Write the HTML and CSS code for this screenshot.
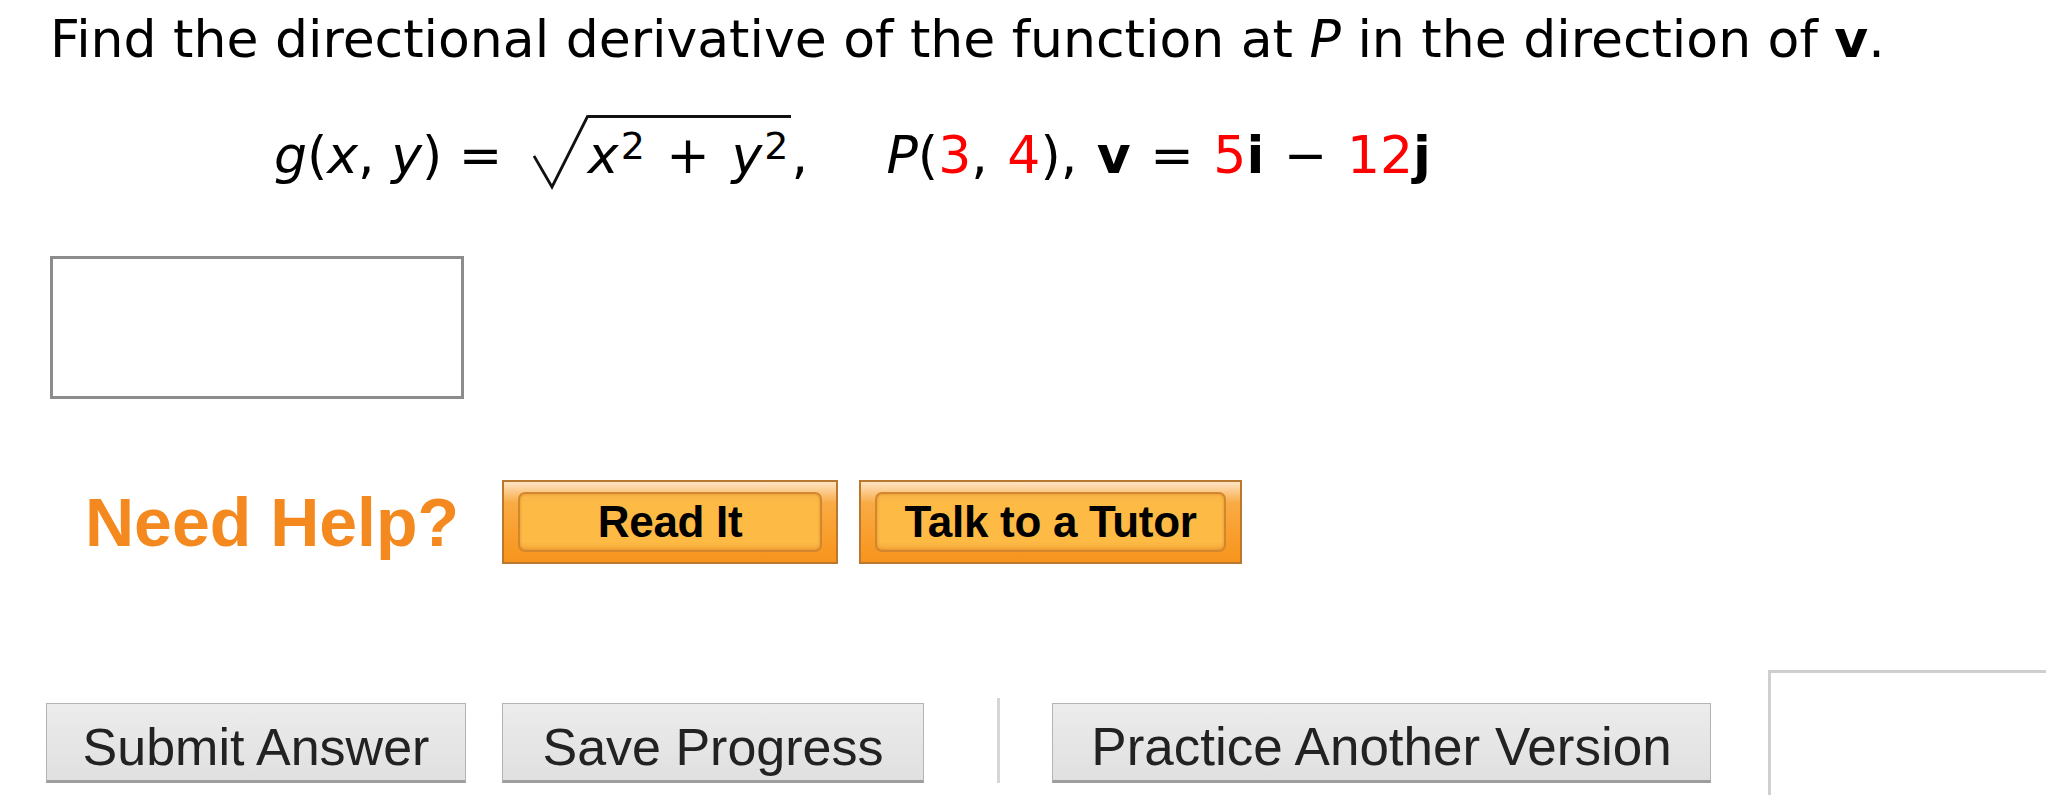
FILE: index.html
```html
<!DOCTYPE html>
<html>
<head>
<meta charset="utf-8">
<title>Directional derivative</title>
<link rel="stylesheet" href="styles.css">
</head>
<body>

<div class="question">
    <p class="qtext">Find the directional derivative of the function at <i>P</i> in the direction of <b>v</b>.</p>
    <p class="formula">
        <i>g</i>(<i>x</i>, <i>y</i>) = <span class="root"><svg class="rad" width="56" height="76" viewBox="0 0 56 76"><path d="M1 42 L19 73 L55 1.5" fill="none" stroke="#111" stroke-width="2.8"/></svg><span class="under"><i>x</i><sup>2</sup> + <i>y</i><sup>2</sup></span></span>,
        <span class="pt"><i>P</i>(<em class="r">3</em>, <em class="r">4</em>), <b>v</b> = <em class="r">5</em><b>i</b> &minus; <em class="r">12</em><b>j</b></span>
    </p>
    <div class="ans"></div>

    <div class="help">
        <span class="needhelp">Need Help?</span>
        <a class="obtn btn-read"><span>Read It</span></a>
        <a class="obtn btn-tutor"><span>Talk to a Tutor</span></a>
    </div>

    <div class="actions">
        <a class="gbtn btn-submit">Submit Answer</a>
        <a class="gbtn btn-save">Save Progress</a>
        <i class="sep"></i>
        <a class="gbtn btn-practice">Practice Another Version</a>
        <div class="side"></div>
    </div>
</div>

</body>
</html>
```

FILE: styles.css
```css
body,p{margin:0;padding:0;}
body{background:#fff;color:#000;overflow:hidden;}
a{text-decoration:none;color:#000;}

.question{padding:0 0 0 50px;font-family:'DejaVu Sans',Verdana,sans-serif;}
.qtext{font-size:52px;line-height:70px;padding-top:4px;white-space:nowrap;}
.qtext b{font-weight:bold;}

.formula{font-size:52px;line-height:90px;padding:36px 0 0 224px;white-space:nowrap;}
.formula i{font-style:italic;}
.formula em.r{font-style:normal;color:#f00;}
.formula sup{font-size:38px;line-height:0;vertical-align:14px;padding-left:2px;}
.root{display:inline-block;margin-left:14px;}
.rad{vertical-align:-17px;margin-right:-1px;}
.under{display:inline-block;border-top:3px solid #111;line-height:74px;padding:0 3px 0 0;word-spacing:5px;}
.pt{margin-left:62px;word-spacing:3px;}

.ans{width:408px;height:137px;border:3px solid #8c8c8c;margin-top:56px;}

.help{display:flex;align-items:center;margin-top:81px;}
.needhelp{font:bold 68px/84px 'Liberation Sans',Arial,sans-serif;color:#f4891f;padding:0 43px 0 35px;}
.obtn{display:block;flex-shrink:0;height:84px;padding:10px 14px;box-sizing:border-box;border:2px solid #b9772f;background:linear-gradient(#fee3c4 0%,#f9ab45 26%,#f9a030 60%,#f7941d 100%);margin-right:21px;}
.obtn span{display:block;height:100%;box-sizing:border-box;border:2px solid #d4862e;border-radius:7px;background:linear-gradient(#f9b448,#fdbb45 20%,#fdbb45 85%,#f6a73a);font:bold 44px/56px 'Liberation Sans',Arial,sans-serif;text-align:center;letter-spacing:-0.3px;box-shadow:inset 0 0 3px rgba(190,110,20,.5);}
.btn-read{width:336px;}
.btn-tutor{width:383px;}

.actions{display:flex;align-items:flex-start;margin-top:106px;}
.gbtn{display:block;flex-shrink:0;box-sizing:border-box;height:80px;margin-top:33px;padding-top:8px;border:1px solid #b4b4b4;border-bottom:3px solid #9d9d9d;background:linear-gradient(#ececec,#e0e0e0);font:52px/70px 'Liberation Sans',Arial,sans-serif;color:#222;text-align:center;}
.btn-submit{width:420px;margin-left:-4px;}
.btn-save{width:422px;margin-left:36px;}
.sep{display:block;flex-shrink:0;width:3px;height:85px;background:#d6d6d6;margin:28px 0 0 73px;}
.btn-practice{width:659px;margin-left:52px;font-size:53px;}
.side{flex-shrink:0;width:300px;height:200px;border:3px solid #cfcfcf;margin-left:57px;}
```
